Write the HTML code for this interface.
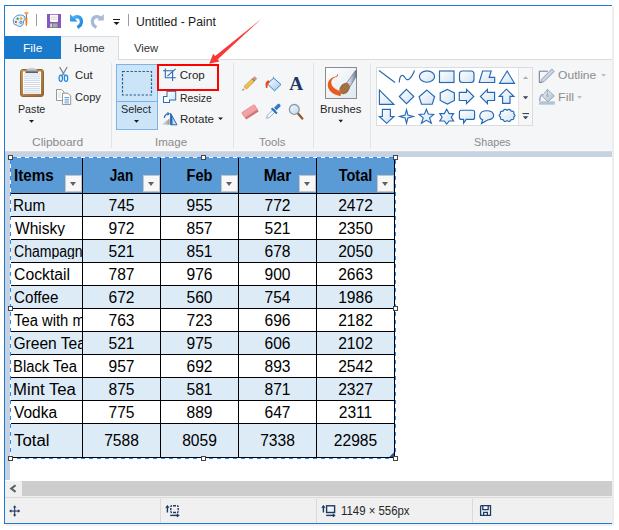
<!DOCTYPE html>
<html><head><meta charset="utf-8"><style>
*{margin:0;padding:0;box-sizing:border-box}
html,body{width:619px;height:530px;overflow:hidden;background:#fff}
body{position:relative;font-family:"Liberation Sans",sans-serif}
.a{position:absolute}
.t{position:absolute;white-space:nowrap;font-size:12px;line-height:12px;color:#262626;transform-origin:0 0}
svg{position:absolute;overflow:visible}
.tb{position:absolute;white-space:nowrap;font-size:15.6px;line-height:15.6px;font-weight:bold;color:#000}
.td{position:absolute;white-space:nowrap;font-size:15.6px;line-height:15.6px;color:#000}
.fb{position:absolute;width:17px;height:17px;background:#f7f7f7;border:1px solid #c6c6c6}
.fb:after{content:"";position:absolute;left:4px;top:6px;border-left:3.5px solid transparent;border-right:3.5px solid transparent;border-top:4px solid #606060}
.hd{position:absolute;width:5px;height:5px;background:#fff;border:1px solid #444}
</style></head><body>

<!-- window frame -->
<div class="a" style="left:4px;top:5px;width:608px;height:1px;background:#1a7ad4"></div>
<div class="a" style="left:4px;top:5px;width:1px;height:519px;background:#1a7ad4"></div>
<div class="a" style="left:4px;top:523px;width:608px;height:1px;background:#1a7ad4"></div>
<div class="a" style="left:612px;top:7px;width:2px;height:518px;background:#ededed"></div>
<div class="a" style="left:6px;top:524px;width:607px;height:2px;background:#f0f0f0"></div>

<!-- title bar -->
<div id="titlebar">
<svg style="left:0;top:0" width="619" height="36">
  <defs>
    <linearGradient id="gpal" x1="0" y1="0" x2="1" y2="1"><stop offset="0" stop-color="#f4f9fe"/><stop offset="1" stop-color="#cfe3f6"/></linearGradient>
    <linearGradient id="gund" x1="0" y1="0" x2="1" y2="1"><stop offset="0" stop-color="#4fb0f0"/><stop offset="1" stop-color="#1a86e0"/></linearGradient>
  </defs>
  <!-- palette -->
  <path d="M13.3 21 C13.3 17 17 15 20.5 15 C23.8 15 25.3 16.5 25 18.5 C24.7 20 23.5 20.5 23.5 22 C23.5 24.5 22 26.5 19.5 26.5 C17.8 26.5 17.5 25 16 25 C14.3 25 13.3 23.3 13.3 21 Z" fill="url(#gpal)" stroke="#4a93d6" stroke-width="1"/>
  <circle cx="17.6" cy="18.8" r="1.2" fill="#3aa83f"/>
  <circle cx="21" cy="18.5" r="1.2" fill="#f2a01a"/>
  <circle cx="15.9" cy="21.9" r="1.1" fill="#e8402f"/>
  <circle cx="20.8" cy="22.3" r="1.1" fill="none" stroke="#3a7fc4" stroke-width="0.9"/>
  <path d="M25.3 18 L27.4 18 L27.1 24.5 L26.4 26.8 L25.6 24.5 Z" fill="#f47c14"/>
  <rect x="25.9" y="14" width="1" height="4" fill="#6d6d6d"/>
  <ellipse cx="26.4" cy="13" rx="2.2" ry="1.2" fill="#f0a868"/>
  <rect x="36" y="14" width="1" height="12" fill="#9a9a9a"/>
  <!-- save -->
  <rect x="47" y="14" width="14" height="14" fill="#8758bf"/>
  <path d="M50 14.8 L58 14.8 L58 21 Q58 22 57 22 L51 22 Q50 22 50 21 Z" fill="#fbfbfd"/>
  <rect x="50.8" y="16.8" width="6.4" height="0.7" fill="#c4c4cc"/>
  <rect x="50.8" y="18.8" width="6.4" height="0.7" fill="#c4c4cc"/>
  <rect x="50" y="23" width="8" height="5" fill="#7d7d85"/>
  <rect x="50.4" y="23.6" width="1.4" height="3.6" fill="#f2f2f2"/>
  <rect x="53" y="23.6" width="4.4" height="3.6" fill="#a9a9b0"/>
  <!-- undo -->
  <path d="M70 14 L70 21.6 L77.6 21.6 Z" fill="url(#gund)"/>
  <path d="M73.2 18.3 C76.2 15.8 81.2 16.2 81.4 21.2 C81.6 24.3 79.6 26.3 77.4 27.4" stroke="url(#gund)" stroke-width="3.3" fill="none"/>
  <!-- redo -->
  <path d="M103.8 14 L103.8 20.6 L97.2 20.6 Z" fill="#a8bbd4"/>
  <path d="M100.6 17.8 C97.6 15.6 92.6 16.2 92.4 21.2 C92.2 24.3 94.2 26.3 96.4 27.4" stroke="#a8bbd4" stroke-width="3.3" fill="none"/>
  <!-- qat dropdown -->
  <rect x="113" y="19" width="7" height="1" fill="#1a1a1a"/>
  <path d="M113.5 22 L119.5 22 L116.5 25 Z" fill="#1a1a1a"/>
  <rect x="128" y="14" width="1" height="12" fill="#9a9a9a"/>
</svg>
</div>

<!-- tabs -->
<div class="a" style="left:5px;top:36px;width:56px;height:23px;background:#1979ca"></div>
<div class="a" style="left:61px;top:36px;width:58px;height:24px;background:#f5f6f7;border:1px solid #dadbdc;border-left:none;border-bottom:none"></div>
<div class="a" style="left:119px;top:59px;width:493px;height:1px;background:#dadbdc"></div>

<!-- ribbon -->
<div class="a" style="left:5px;top:60px;width:607px;height:91px;background:#f5f6f7"></div>
<div class="a" style="left:111px;top:63px;width:1px;height:85px;background:#e2e3e4"></div>
<div class="a" style="left:233px;top:63px;width:1px;height:85px;background:#e2e3e4"></div>
<div class="a" style="left:313px;top:63px;width:1px;height:85px;background:#e2e3e4"></div>
<div class="a" style="left:370px;top:63px;width:1px;height:85px;background:#e2e3e4"></div>

<!-- group labels -->

<!-- clipboard group -->
<svg style="left:0;top:0" width="619" height="150">
  <defs>
    <linearGradient id="gbrd" x1="0" y1="0" x2="1" y2="1"><stop offset="0" stop-color="#c99557"/><stop offset="1" stop-color="#9c6a34"/></linearGradient>
    <linearGradient id="gclip" x1="0" y1="0" x2="0" y2="1"><stop offset="0" stop-color="#e8e8e8"/><stop offset="1" stop-color="#8a8a8a"/></linearGradient>
  </defs>
  <rect x="20.5" y="69.5" width="23" height="27" rx="2.5" fill="url(#gbrd)" stroke="#94652f" stroke-width="1"/>
  <rect x="23" y="71.5" width="18" height="22.5" fill="#fdfdfd"/>
  <g stroke="#b4c6d8" stroke-width="0.7"><line x1="24" y1="74.0" x2="40" y2="74.0"/><line x1="24" y1="76.1" x2="40" y2="76.1"/><line x1="24" y1="78.2" x2="40" y2="78.2"/><line x1="24" y1="80.3" x2="40" y2="80.3"/><line x1="24" y1="82.4" x2="40" y2="82.4"/><line x1="24" y1="84.5" x2="40" y2="84.5"/><line x1="24" y1="86.6" x2="40" y2="86.6"/><line x1="24" y1="88.7" x2="40" y2="88.7"/><line x1="24" y1="90.8" x2="40" y2="90.8"/><line x1="24" y1="92.9" x2="40" y2="92.9"/></g>
  <path d="M25.5 72.5 C26 69.5 28.5 67.5 31.7 67.5 C35 67.5 37.5 69.5 38 72.5 Z" fill="url(#gclip)"/>
  <rect x="25.5" y="71.6" width="12.5" height="1.2" fill="#4a4a4a"/>
  <path d="M29 120 L34 120 L31.5 122.8 Z" fill="#1a1a1a"/>
  <!-- scissors -->
  <path d="M59.6 67 L64.6 75.5 M67.2 67 L62.2 75.5" stroke="#7b8794" stroke-width="1.3" fill="none"/>
  <ellipse cx="60.8" cy="78.3" rx="1.7" ry="3.1" fill="#e3f1fc" stroke="#1f87e0" stroke-width="1.2"/>
  <ellipse cx="66" cy="78.3" rx="1.7" ry="3.1" fill="#e3f1fc" stroke="#1f87e0" stroke-width="1.2"/>
  <!-- copy -->
  <path d="M56.5 89.5 L61.5 89.5 L64 92 L64 100.5 L56.5 100.5 Z" fill="#fff" stroke="#8c8c8c" stroke-width="0.9"/>
  <g stroke="#b8cde0" stroke-width="0.7"><line x1="58" y1="93" x2="61" y2="93"/><line x1="58" y1="95" x2="61" y2="95"/><line x1="58" y1="97" x2="61" y2="97"/></g>
  <path d="M62.5 93.2 L68 93.2 L70.7 96 L70.7 104.5 L62.5 104.5 Z" fill="#fff" stroke="#8c8c8c" stroke-width="0.9"/>
  <g stroke="#3d8ad6" stroke-width="0.8"><line x1="64.5" y1="97.5" x2="69" y2="97.5"/><line x1="64.5" y1="99.3" x2="69" y2="99.3"/><line x1="64.5" y1="101.1" x2="69" y2="101.1"/><line x1="64.5" y1="102.9" x2="69" y2="102.9"/></g>
</svg>

<!-- image group -->
<div class="a" style="left:116px;top:64px;width:42px;height:66px;background:#cce4f7;border:1px solid #7eb3e8"></div>
<div class="a" style="left:116px;top:101px;width:42px;height:1px;background:#7eb3e8"></div>
<svg style="left:0;top:0" width="619" height="150">
  <defs>
    <linearGradient id="glb" x1="0" y1="0" x2="1" y2="1"><stop offset="0" stop-color="#ffffff"/><stop offset="1" stop-color="#d4e6f6"/></linearGradient>
    <linearGradient id="ggr" x1="0" y1="0" x2="1" y2="0"><stop offset="0" stop-color="#f0f0f0"/><stop offset="1" stop-color="#9a9a9a"/></linearGradient>
  </defs>
  <rect x="122.5" y="71.5" width="29" height="23.5" fill="none" stroke="#2d5c8e" stroke-width="1.2" stroke-dasharray="2.4 1.6"/>
  <path d="M134 120 L139 120 L136.5 122.8 Z" fill="#1a1a1a"/>
  <!-- crop -->
  <g stroke="#2a6cb5" stroke-width="1.1" fill="none">
    <path d="M165.3 68.5 L165.3 77.7 L175.8 77.7"/>
    <path d="M163 70.7 L172.6 70.7 L172.6 81"/>
    <path d="M167.4 76.2 L175.6 68.8"/>
  </g>
  <!-- resize -->
  <rect x="163.5" y="96.5" width="6" height="6" fill="#fff" stroke="#2a6cb5" stroke-width="1"/>
  <rect x="167" y="91.3" width="8.7" height="8.7" fill="url(#glb)" stroke="#2a6cb5" stroke-width="1"/>
  <rect x="164.1" y="97.1" width="4.8" height="4.8" fill="#fff"/>
  <rect x="167.6" y="97.1" width="1.3" height="2.4" fill="#fff"/>
  <!-- rotate -->
  <path d="M161 124.8 L169.7 118.6 L169.7 124.8 Z" fill="url(#ggr)"/>
  <path d="M170.6 113.3 L177 124.8 L170.6 124.8 Z" fill="#c5dcf2" stroke="#2a6cb5" stroke-width="1" stroke-linejoin="round"/>
  <path d="M170.6 113.3 L170.6 124.8 L172.5 124.8 L172.5 116.5 Z" fill="#2a6cb5"/>
  <path d="M164.3 117.8 C164.8 115.2 166.5 113.8 168.3 113.8" fill="none" stroke="#2a6cb5" stroke-width="1.3"/>
  <path d="M167.5 111.8 L170 113.8 L167.5 115.8 Z" fill="#2a6cb5"/>
  <path d="M218 117.5 L223 117.5 L220.5 120 Z" fill="#1a1a1a"/>
</svg>
<div class="a" style="left:157px;top:64px;width:62px;height:27px;border:2px solid #fe0000"></div>

<!-- tools group -->
<svg style="left:0;top:0" width="619" height="150">
  <defs>
    <linearGradient id="gbk" x1="0" y1="0" x2="1" y2="1"><stop offset="0" stop-color="#ffffff"/><stop offset="1" stop-color="#9cc8ee"/></linearGradient>
    <linearGradient id="gmag" x1="0" y1="0" x2="1" y2="1"><stop offset="0" stop-color="#f4f9fe"/><stop offset="1" stop-color="#bcd9f2"/></linearGradient>
  </defs>
  <!-- pencil -->
  <g transform="translate(242.3 90.6) rotate(-44)">
    <path d="M0 0 L4.2 -1.8 L4.2 1.8 Z" fill="#f3dcb0"/>
    <path d="M0 0 L1.6 -0.7 L1.6 0.7 Z" fill="#2a2a2a"/>
    <rect x="4.2" y="-1.8" width="10.8" height="3.6" fill="#f2c249" stroke="#a07424" stroke-width="0.5"/>
    <rect x="15" y="-1.8" width="1.3" height="3.6" fill="#5a8f5a"/>
    <rect x="16.3" y="-1.8" width="2.6" height="3.6" rx="0.6" fill="#e48b80"/>
  </g>
  <!-- fill bucket -->
  <path d="M273.5 76.5 L273.2 82" stroke="#8a8a8a" stroke-width="0.8" fill="none"/>
  <circle cx="273.2" cy="82.2" r="0.9" fill="none" stroke="#8a8a8a" stroke-width="0.6"/>
  <path d="M267 83.5 L273.8 78.2 L281 84.5 L274.5 90.8 Z" fill="url(#gbk)" stroke="#3b7fc6" stroke-width="1" stroke-linejoin="round"/>
  <path d="M268.6 80.2 C266.6 80.6 265.3 82.6 265.5 85 L265.9 88 L267.3 88 L267.8 84.5 L270 82 Z" fill="#e84a1a"/>
  <!-- A -->
  <text x="289.2" y="89.8" font-family="Liberation Serif" font-weight="bold" font-size="19.2" fill="#1f3864">A</text>
  <!-- eraser -->
  <g transform="translate(250 111.8) rotate(-33)">
    <rect x="-7.5" y="-3.8" width="15" height="6" rx="0.8" fill="#f4a3a3" stroke="#d77b7b" stroke-width="0.6"/>
    <rect x="-7.5" y="2.2" width="15" height="2.2" fill="#d27474"/>
  </g>
  <!-- color picker -->
  <path d="M266.5 118.3 L267.3 115.3 L273.8 108.8 L276 111 L269.5 117.5 Z" fill="#eef5fb" stroke="#7f96ad" stroke-width="0.7"/>
  <path d="M272.3 107.5 L277.6 112.8 L276.2 114.2 L270.9 108.9 Z" fill="#2c6fb8"/>
  <path d="M274 107.8 L277.8 104 C279 102.8 281.5 105.3 280.3 106.5 L276.5 110.3 Z" fill="#2f7bcf"/>
  <!-- magnifier -->
  <path d="M298 113.5 L302.3 118.6" stroke="#8f5a2a" stroke-width="2.3" stroke-linecap="round"/>
  <circle cx="294.3" cy="109.4" r="4.9" fill="url(#gmag)" stroke="#8c98a4" stroke-width="1.3"/>
</svg>

<!-- brushes -->
<svg style="left:0;top:0" width="619" height="150">
  <defs>
    <linearGradient id="gbrbg" x1="0" y1="0" x2="1" y2="1"><stop offset="0" stop-color="#ffffff"/><stop offset="1" stop-color="#dde8f1"/></linearGradient>
    <linearGradient id="ghdl" x1="0" y1="0" x2="1" y2="0"><stop offset="0" stop-color="#f2f4f7"/><stop offset="0.5" stop-color="#c0c8d4"/><stop offset="1" stop-color="#6f7f96"/></linearGradient>
  </defs>
  <rect x="325.5" y="67.5" width="31" height="31" fill="url(#gbrbg)" stroke="#8c8c8c" stroke-width="1"/>
  <path d="M336.8 73.8 C337.8 75 337 76.2 335.5 76.5 C331 77.5 327.8 80.5 327.8 85 C327.8 89.5 331.5 93 335 94.5 L340.5 96.3 C341.5 93.5 340.5 91.5 338.5 90.5 C334 88.5 331.5 86 331.3 83 C331.2 79.5 333.5 77.8 336.3 77 C338.5 76.3 338.8 74.5 336.8 73.8 Z" fill="#ea5a1c"/>
  <path d="M345.5 84.5 L355.5 70.5 L356.2 70.8 L356.2 76.5 L349.2 88 Z" fill="url(#ghdl)" stroke="#3f4f66" stroke-width="0.5"/>
  <ellipse cx="344.6" cy="88.6" rx="6.3" ry="4.6" transform="rotate(-52 344.6 88.6)" fill="#9d6d3d"/>
  <path d="M340 92 L347.5 84 M342 93 L349 86" stroke="#b88a58" stroke-width="0.6"/>
  <path d="M338.5 119.8 L343 119.8 L340.75 122.6 Z" fill="#1a1a1a"/>
</svg>

<!-- shapes gallery -->
<div class="a" style="left:376px;top:67px;width:157px;height:59px;border:1px solid #dcdcdc;background:#fff"></div>
<div class="a" style="left:518px;top:68px;width:14px;height:57px;background:#f7f7f7;border-left:1px solid #e3e3e3"></div>
<svg style="left:0;top:0" width="619" height="150" id="shapes">
 <defs>
  <linearGradient id="gsh" x1="0" y1="0" x2="1" y2="1"><stop offset="0" stop-color="#ffffff"/><stop offset="1" stop-color="#d2e4f4"/></linearGradient>
  <linearGradient id="gfl" x1="0" y1="0" x2="1" y2="1"><stop offset="0" stop-color="#f4f6f8"/><stop offset="1" stop-color="#a9b9cb"/></linearGradient>
 </defs>
 <g fill="url(#gsh)" stroke="#2568b3" stroke-width="1.15" stroke-linejoin="miter">
  <!-- row1 -->
  <path d="M379 70.5 L395 82.5" fill="none"/>
  <path d="M399.3 82.5 C399.5 75 402.5 73.5 404.8 77.5 C407 81.3 410.5 80.5 414.5 70.5" fill="none"/>
  <ellipse cx="427" cy="76.5" rx="7.6" ry="5.7"/>
  <rect x="439.5" y="71" width="14.5" height="11.5"/>
  <rect x="459.5" y="71" width="14.5" height="11.5" rx="3"/>
  <path d="M482.6 71 L491.2 71 L489.2 77.3 L494.7 77.3 L494.7 82.5 L479.2 82.5 Z"/>
  <path d="M507.1 71 L514.5 83.3 L499.6 83.3 Z"/>
  <!-- row2 -->
  <path d="M379.4 90 L379.4 104.3 L393.9 104.3 Z"/>
  <path d="M406.5 89.4 L413.8 96.5 L406.5 103.6 L399.3 96.5 Z"/>
  <path d="M426.9 90.1 L434.6 96.8 L432.2 104.2 L421.5 104.2 L419.1 96.8 Z"/>
  <path d="M447.4 89.4 L454.4 92.9 L454.4 100.5 L447.4 104.1 L440.2 100.5 L440.2 92.9 Z"/>
  <path d="M459.3 92.4 L466.5 92.4 L466.5 89.4 L473.8 96.5 L466.5 103.6 L466.5 100.5 L459.3 100.5 Z"/>
  <path d="M494.6 92.4 L487.4 92.4 L487.4 89.4 L480.4 96.5 L487.4 103.6 L487.4 100.5 L494.6 100.5 Z"/>
  <path d="M506.3 89.2 L513.9 96.3 L510 96.3 L510 103.3 L502.6 103.3 L502.6 96.3 L499.2 96.3 Z"/>
  <!-- row3 -->
  <path d="M382.4 109.4 L390.4 109.4 L390.4 116.5 L393.9 116.5 L386.7 123.3 L379.4 116.5 L382.4 116.5 Z"/>
  <path d="M406.5 109.7 L407.9 115.1 L413.3 116.5 L407.9 117.9 L406.5 123.3 L405.1 117.9 L399.7 116.5 L405.1 115.1 Z"/>
  <path d="M426.4 109.3 L428.3 114 L433.7 114.5 L429.6 117.9 L431.4 123.2 L426.4 120.3 L421.4 123.2 L423.2 117.9 L419.1 114.5 L424.5 114 Z"/>
  <path d="M446.7 109.3 L449.1 113.6 L453.6 113.6 L451.3 117.3 L453.6 121 L449.1 121 L446.7 124 L444.3 121 L439.8 121 L442.1 117.3 L439.8 113.6 L444.3 113.6 Z"/>
  <path d="M461.4 110.2 L472.6 110.2 Q474.6 110.2 474.6 112.2 L474.6 117.4 Q474.6 119.4 472.6 119.4 L466.3 119.4 L463.6 123.2 L463.6 119.4 L461.4 119.4 Q459.4 119.4 459.4 117.4 L459.4 112.2 Q459.4 110.2 461.4 110.2 Z"/>
  <path d="M482.6 119.8 C478.3 118 478.5 110.7 486.9 110.7 C495 110.7 496.5 119.4 487.6 120 L481.5 123.5 Z"/>
  <path d="M507.10 110.20 Q509.97 108.17 511.16 111.19 Q514.62 110.93 513.66 113.79 Q516.40 115.40 513.66 117.01 Q514.62 119.87 511.16 119.61 Q509.97 122.63 507.10 120.60 Q504.23 122.63 503.04 119.61 Q499.58 119.87 500.54 117.01 Q497.80 115.40 500.54 113.79 Q499.58 110.93 503.04 111.19 Q504.23 108.17 507.10 110.20 Z"/>
 </g>
  <!-- scroll arrows -->
  <path d="M522.8 79 L528.3 79 L525.55 76.3 Z" fill="#a9b1ba"/>
  <path d="M522.8 96.2 L528.3 96.2 L525.55 99.2 Z" fill="#34445c"/>
  <rect x="522.5" y="113" width="6.5" height="1.1" fill="#34445c"/>
  <path d="M522.8 116.2 L528.3 116.2 L525.55 119.2 Z" fill="#34445c"/>
  <!-- outline icon -->
  <defs><linearGradient id="gpen" x1="0" y1="0" x2="1" y2="1"><stop offset="0" stop-color="#e6edf5"/><stop offset="1" stop-color="#aebdd0"/></linearGradient></defs>
  <path d="M547.8 71.2 L539.3 71.2 L539.3 82.5 L542 82.5" fill="none" stroke="#6d7a92" stroke-width="1"/>
  <path d="M540.8 82.6 L541.6 79.2 L551.8 69 L554.2 71.4 L544 81.6 Z" fill="url(#gpen)" stroke="#7f8da6" stroke-width="0.8" stroke-linejoin="round"/>
  <path d="M601.2 74.2 L606 74.2 L603.6 76.6 Z" fill="#b0b0b0"/>
  <!-- fill icon -->
  <rect x="539.1" y="101.3" width="15.7" height="3.4" fill="#b4c3d4"/>
  <path d="M542.3 96 L547.5 89.4 L554.4 96 L547.7 101.8 Z" fill="url(#gfl)" stroke="#93a3b8" stroke-width="0.9" stroke-linejoin="round"/>
  <circle cx="547.4" cy="95.6" r="0.9" fill="none" stroke="#7f8da6" stroke-width="0.6"/>
  <path d="M547.4 89.6 L547.4 94.7" stroke="#7f8da6" stroke-width="0.6"/>
  <path d="M542.5 94.2 C540.6 95.5 539.6 98 539.8 101" stroke="#a0b0c4" stroke-width="1.6" fill="none"/>
  <path d="M577.2 96.2 L582 96.2 L579.6 98.6 Z" fill="#b0b0b0"/>
</svg>

<!-- workspace -->
<div class="a" style="left:5px;top:150px;width:607px;height:1px;background:#f9fafa"></div>
<div class="a" style="left:5px;top:151px;width:607px;height:1px;background:#d5d8dc"></div>
<div class="a" style="left:5px;top:152px;width:607px;height:5px;background:#c6d1e1"></div>
<div class="a" style="left:5px;top:152px;width:5px;height:328px;background:#c6d1e1"></div>

<!-- table image -->
<div class="a" style="left:10px;top:157px;width:385px;height:37px;background:#5b9bd5"></div>
<div class="a" style="left:10px;top:194px;width:385px;height:22px;background:#ddebf7"></div>
<div class="a" style="left:10px;top:217px;width:385px;height:22px;background:#ffffff"></div>
<div class="a" style="left:10px;top:240px;width:385px;height:22px;background:#ddebf7"></div>
<div class="a" style="left:10px;top:263px;width:385px;height:22px;background:#ffffff"></div>
<div class="a" style="left:10px;top:286px;width:385px;height:22px;background:#ddebf7"></div>
<div class="a" style="left:10px;top:309px;width:385px;height:22px;background:#ffffff"></div>
<div class="a" style="left:10px;top:332px;width:385px;height:22px;background:#ddebf7"></div>
<div class="a" style="left:10px;top:355px;width:385px;height:22px;background:#ffffff"></div>
<div class="a" style="left:10px;top:378px;width:385px;height:22px;background:#ddebf7"></div>
<div class="a" style="left:10px;top:401px;width:385px;height:22px;background:#ffffff"></div>
<div class="a" style="left:10px;top:424px;width:385px;height:33px;background:#ddebf7"></div>
<div class="a" style="left:10px;top:193px;width:385px;height:1px;background:#000"></div>
<div class="a" style="left:10px;top:216px;width:385px;height:1px;background:#000"></div>
<div class="a" style="left:10px;top:239px;width:385px;height:1px;background:#000"></div>
<div class="a" style="left:10px;top:262px;width:385px;height:1px;background:#000"></div>
<div class="a" style="left:10px;top:285px;width:385px;height:1px;background:#000"></div>
<div class="a" style="left:10px;top:308px;width:385px;height:1px;background:#000"></div>
<div class="a" style="left:10px;top:331px;width:385px;height:1px;background:#000"></div>
<div class="a" style="left:10px;top:354px;width:385px;height:1px;background:#000"></div>
<div class="a" style="left:10px;top:377px;width:385px;height:1px;background:#000"></div>
<div class="a" style="left:10px;top:400px;width:385px;height:1px;background:#000"></div>
<div class="a" style="left:10px;top:423px;width:385px;height:1px;background:#000"></div>
<div class="a" style="left:10px;top:457px;width:385px;height:1px;background:#000"></div>
<div class="a" style="left:82px;top:157px;width:1px;height:301px;background:#000"></div>
<div class="a" style="left:160px;top:157px;width:1px;height:301px;background:#000"></div>
<div class="a" style="left:238px;top:157px;width:1px;height:301px;background:#000"></div>
<div class="a" style="left:316px;top:157px;width:1px;height:301px;background:#000"></div>
<div class="a" style="left:394px;top:157px;width:1px;height:301px;background:#000"></div>
<div class="tb" style="left:14.2px;top:167.79px;transform:scaleX(0.975);transform-origin:0 0">Items</div>
<div class="fb" style="left:65px;top:175px"></div>
<div class="tb" style="left:83px;width:77px;text-align:center;top:167.79px;transform:scaleX(0.87)">Jan</div>
<div class="fb" style="left:143px;top:175px"></div>
<div class="tb" style="left:161px;width:77px;text-align:center;top:167.79px;transform:scaleX(0.93)">Feb</div>
<div class="fb" style="left:221px;top:175px"></div>
<div class="tb" style="left:239px;width:77px;text-align:center;top:167.79px;transform:scaleX(1.0)">Mar</div>
<div class="fb" style="left:299px;top:175px"></div>
<div class="tb" style="left:317px;width:77px;text-align:center;top:167.79px;transform:scaleX(0.93)">Total</div>
<div class="fb" style="left:377px;top:175px"></div>
<div class="td" style="left:13.28px;width:70.12px;overflow:hidden;top:197.79px;transform:scaleX(0.98);transform-origin:0 0">Rum</div>
<div class="td" style="left:83px;width:77px;text-align:center;top:197.79px">745</div>
<div class="td" style="left:161px;width:77px;text-align:center;top:197.79px">955</div>
<div class="td" style="left:239px;width:77px;text-align:center;top:197.79px">772</div>
<div class="td" style="left:317px;width:77px;text-align:center;top:197.79px">2472</div>
<div class="td" style="left:14.63px;width:67.57px;overflow:hidden;top:220.79px;transform:scaleX(0.997);transform-origin:0 0">Whisky</div>
<div class="td" style="left:83px;width:77px;text-align:center;top:220.79px">972</div>
<div class="td" style="left:161px;width:77px;text-align:center;top:220.79px">857</div>
<div class="td" style="left:239px;width:77px;text-align:center;top:220.79px">521</div>
<div class="td" style="left:317px;width:77px;text-align:center;top:220.79px">2350</div>
<div class="td" style="left:13.6px;width:76.00px;overflow:hidden;top:243.79px;transform:scaleX(0.9);transform-origin:0 0">Champagne</div>
<div class="td" style="left:83px;width:77px;text-align:center;top:243.79px">521</div>
<div class="td" style="left:161px;width:77px;text-align:center;top:243.79px">851</div>
<div class="td" style="left:239px;width:77px;text-align:center;top:243.79px">678</div>
<div class="td" style="left:317px;width:77px;text-align:center;top:243.79px">2050</div>
<div class="td" style="left:13.54px;width:67.72px;overflow:hidden;top:266.79px;transform:scaleX(1.011);transform-origin:0 0">Cocktail</div>
<div class="td" style="left:83px;width:77px;text-align:center;top:266.79px">787</div>
<div class="td" style="left:161px;width:77px;text-align:center;top:266.79px">976</div>
<div class="td" style="left:239px;width:77px;text-align:center;top:266.79px">900</div>
<div class="td" style="left:317px;width:77px;text-align:center;top:266.79px">2663</div>
<div class="td" style="left:13.57px;width:70.40px;overflow:hidden;top:289.79px;transform:scaleX(0.972);transform-origin:0 0">Coffee</div>
<div class="td" style="left:83px;width:77px;text-align:center;top:289.79px">672</div>
<div class="td" style="left:161px;width:77px;text-align:center;top:289.79px">560</div>
<div class="td" style="left:239px;width:77px;text-align:center;top:289.79px">754</div>
<div class="td" style="left:317px;width:77px;text-align:center;top:289.79px">1986</div>
<div class="td" style="left:13.5px;width:72.11px;overflow:hidden;top:312.79px;transform:scaleX(0.95);transform-origin:0 0">Tea with milk</div>
<div class="td" style="left:83px;width:77px;text-align:center;top:312.79px">763</div>
<div class="td" style="left:161px;width:77px;text-align:center;top:312.79px">723</div>
<div class="td" style="left:239px;width:77px;text-align:center;top:312.79px">696</div>
<div class="td" style="left:317px;width:77px;text-align:center;top:312.79px">2182</div>
<div class="td" style="left:13.4px;width:68.60px;overflow:hidden;top:335.79px;transform:scaleX(1.0);transform-origin:0 0">Green Tea</div>
<div class="td" style="left:83px;width:77px;text-align:center;top:335.79px">521</div>
<div class="td" style="left:161px;width:77px;text-align:center;top:335.79px">975</div>
<div class="td" style="left:239px;width:77px;text-align:center;top:335.79px">606</div>
<div class="td" style="left:317px;width:77px;text-align:center;top:335.79px">2102</div>
<div class="td" style="left:12.91px;width:72.73px;overflow:hidden;top:358.79px;transform:scaleX(0.95);transform-origin:0 0">Black Tea</div>
<div class="td" style="left:83px;width:77px;text-align:center;top:358.79px">957</div>
<div class="td" style="left:161px;width:77px;text-align:center;top:358.79px">692</div>
<div class="td" style="left:239px;width:77px;text-align:center;top:358.79px">893</div>
<div class="td" style="left:317px;width:77px;text-align:center;top:358.79px">2542</div>
<div class="td" style="left:12.76px;width:64.59px;overflow:hidden;top:381.79px;transform:scaleX(1.072);transform-origin:0 0">Mint Tea</div>
<div class="td" style="left:83px;width:77px;text-align:center;top:381.79px">875</div>
<div class="td" style="left:161px;width:77px;text-align:center;top:381.79px">581</div>
<div class="td" style="left:239px;width:77px;text-align:center;top:381.79px">871</div>
<div class="td" style="left:317px;width:77px;text-align:center;top:381.79px">2327</div>
<div class="td" style="left:13.98px;width:68.43px;overflow:hidden;top:404.79px;transform:scaleX(0.994);transform-origin:0 0">Vodka</div>
<div class="td" style="left:83px;width:77px;text-align:center;top:404.79px">775</div>
<div class="td" style="left:161px;width:77px;text-align:center;top:404.79px">889</div>
<div class="td" style="left:239px;width:77px;text-align:center;top:404.79px">647</div>
<div class="td" style="left:317px;width:77px;text-align:center;top:404.79px">2311</div>
<div class="td" style="left:14.3px;width:62.92px;overflow:hidden;top:432.79px;transform:scaleX(1.076);transform-origin:0 0">Total</div>
<div class="td" style="left:83px;width:77px;text-align:center;top:432.79px">7588</div>
<div class="td" style="left:161px;width:77px;text-align:center;top:432.79px">8059</div>
<div class="td" style="left:239px;width:77px;text-align:center;top:432.79px">7338</div>
<div class="td" style="left:317px;width:77px;text-align:center;top:432.79px">22985</div>
<svg style="left:0;top:0" width="619" height="530"><path d="M394 452.2 L394 457 L389.2 457 Z" fill="#2f5597"/></svg>
<div class="a" style="left:10px;top:157px;width:386px;height:1px;background:repeating-linear-gradient(90deg,#fff 0 3px,#1e90ff 3px 7px,#fff 7px 8px)"></div>
<div class="a" style="left:10px;top:458px;width:386px;height:1px;background:repeating-linear-gradient(90deg,#1e90ff 0 3px,#fff 3px 7px,#1e90ff 7px 8px)"></div>
<div class="a" style="left:10px;top:157px;width:1px;height:302px;background:repeating-linear-gradient(180deg,#fff 0 3px,#1e90ff 3px 7px,#fff 7px 8px)"></div>
<div class="a" style="left:395px;top:157px;width:1px;height:302px;background:repeating-linear-gradient(180deg,#fff 0 3px,#1e90ff 3px 7px,#fff 7px 8px)"></div>
<div class="hd" style="left:8px;top:155px"></div>
<div class="hd" style="left:201px;top:155px"></div>
<div class="hd" style="left:393px;top:155px"></div>
<div class="hd" style="left:8px;top:306px"></div>
<div class="hd" style="left:393px;top:306px"></div>
<div class="hd" style="left:8px;top:456px"></div>
<div class="hd" style="left:201px;top:456px"></div>
<div class="hd" style="left:393px;top:456px"></div>

<!-- scrollbar -->
<div class="a" style="left:5px;top:481px;width:607px;height:16px;background:#f0f0f0"></div>
<div class="a" style="left:22px;top:481px;width:590px;height:15px;background:#cdcdcd"></div>
<svg style="left:0;top:0" width="619" height="530">
  <path d="M15.6 485.3 L11.2 488.6 L15.6 491.9" fill="none" stroke="#5f5f5f" stroke-width="2"/>
</svg>
<div class="a" style="left:5px;top:497px;width:607px;height:1px;background:#dadada"></div>

<!-- status bar -->
<div class="a" style="left:5px;top:498px;width:607px;height:25px;background:#f0f0f0"></div>
<div class="a" style="left:160px;top:499px;width:1px;height:24px;background:#d9d9d9"></div>
<div class="a" style="left:316px;top:499px;width:1px;height:24px;background:#d9d9d9"></div>
<div class="a" style="left:472px;top:499px;width:1px;height:24px;background:#d9d9d9"></div>
<svg style="left:0;top:0" width="619" height="530">
  <defs><linearGradient id="gst" x1="0" y1="0" x2="1" y2="1"><stop offset="0" stop-color="#ffffff"/><stop offset="1" stop-color="#dbe8f3"/></linearGradient></defs>
  <g fill="#1f3a5f" stroke="none">
   <rect x="14.1" y="506.5" width="1.1" height="9"/>
   <rect x="10" y="510.5" width="9.3" height="1.1"/>
   <path d="M14.65 505.2 L12.9 507.5 L16.4 507.5 Z"/>
   <path d="M14.65 516.8 L12.9 514.5 L16.4 514.5 Z"/>
   <path d="M9.1 511.05 L11.4 509.3 L11.4 512.8 Z"/>
   <path d="M20.2 511.05 L17.9 509.3 L17.9 512.8 Z"/>
  </g>
  <g stroke="#1f3a5f" fill="none">
   <path d="M167.4 512.5 L167.4 506.5" stroke-width="1.4"/>
   <path d="M165.8 507.6 L167.4 505.3 L169 507.6 Z" fill="#1f3a5f" stroke-width="0.6"/>
   <path d="M170.8 507 Q170.8 505.8 172 505.8 M173 505.8 L176 505.8 M177 505.8 Q178.2 505.8 178.2 507 M178.2 508 L178.2 510.3 M178.2 511.3 Q178.2 512.5 177 512.5 M176 512.5 L173 512.5 M172 512.5 Q170.8 512.5 170.8 511.3 M170.8 510.3 L170.8 508" stroke-width="1.4"/>
   <path d="M170.2 515.4 L178 515.4" stroke-width="1.4"/>
   <path d="M177 513.8 L179.3 515.4 L177 517 Z" fill="#1f3a5f" stroke-width="0.6"/>
  </g>
  <g stroke="#1f3a5f" fill="none">
   <path d="M323.4 512.5 L323.4 506.5" stroke-width="1.4"/>
   <path d="M321.8 507.6 L323.4 505.3 L325 507.6 Z" fill="#1f3a5f" stroke-width="0.6"/>
   <rect x="326.6" y="505.8" width="8" height="6.7" fill="url(#gst)" stroke-width="1.4"/>
   <path d="M326.2 515.4 L334 515.4" stroke-width="1.4"/>
   <path d="M333 513.8 L335.3 515.4 L333 517 Z" fill="#1f3a5f" stroke-width="0.6"/>
  </g>
  <g stroke="#1f3a5f" stroke-width="1.3" fill="none">
   <path d="M481.2 505.6 L490.5 505.6 L490.5 515.4 L480.6 515.4 L480.6 506.2 Z" fill="#f4f9fd"/>
   <path d="M482.8 505.6 L482.8 509.6 L488.2 509.6 L488.2 505.6"/>
   <path d="M483.6 515.4 L483.6 512.3 L487.4 512.3 L487.4 515.4"/>
  </g>
</svg>

<div class="t" style="left:135.71px;top:15.90px;font-size:12px;line-height:12px;font-weight:400;color:#1a1a1a;transform:scaleX(1.015)">Untitled - Paint</div>
<div class="t" style="left:23.17px;top:42.20px;font-size:11.6px;line-height:11.6px;font-weight:400;color:#ffffff;transform:scaleX(1.034)">File</div>
<div class="t" style="left:74.31px;top:42.20px;font-size:11.6px;line-height:11.6px;font-weight:400;color:#333333;transform:scaleX(0.991)">Home</div>
<div class="t" style="left:134.38px;top:42.20px;font-size:11.6px;line-height:11.6px;font-weight:400;color:#333333;transform:scaleX(0.973)">View</div>
<div class="t" style="left:17.58px;top:102.80px;font-size:11.6px;line-height:11.6px;font-weight:400;color:#262626;transform:scaleX(0.921)">Paste</div>
<div class="t" style="left:74.99px;top:69.00px;font-size:11.6px;line-height:11.6px;font-weight:400;color:#262626;transform:scaleX(0.978)">Cut</div>
<div class="t" style="left:75.00px;top:90.80px;font-size:11.6px;line-height:11.6px;font-weight:400;color:#262626;transform:scaleX(0.955)">Copy</div>
<div class="t" style="left:120.94px;top:103.40px;font-size:11.6px;line-height:11.6px;font-weight:400;color:#262626;transform:scaleX(0.930)">Select</div>
<div class="t" style="left:179.68px;top:68.90px;font-size:11.6px;line-height:11.6px;font-weight:400;color:#262626;transform:scaleX(1.000)">Crop</div>
<div class="t" style="left:179.90px;top:92.00px;font-size:11.6px;line-height:11.6px;font-weight:400;color:#262626;transform:scaleX(0.900)">Resize</div>
<div class="t" style="left:179.80px;top:113.00px;font-size:11.6px;line-height:11.6px;font-weight:400;color:#262626;transform:scaleX(0.996)">Rotate</div>
<div class="t" style="left:319.62px;top:103.00px;font-size:11.6px;line-height:11.6px;font-weight:400;color:#262626;transform:scaleX(0.975)">Brushes</div>
<div class="t" style="left:558.18px;top:69.00px;font-size:11.6px;line-height:11.6px;font-weight:400;color:#8d8d8d;transform:scaleX(1.043)">Outline</div>
<div class="t" style="left:557.62px;top:90.80px;font-size:11.6px;line-height:11.6px;font-weight:400;color:#8d8d8d;transform:scaleX(1.085)">Fill</div>
<div class="t" style="left:31.95px;top:136.00px;font-size:11.6px;line-height:11.6px;font-weight:400;color:#8a8a8a;transform:scaleX(1.032)">Clipboard</div>
<div class="t" style="left:155.18px;top:135.50px;font-size:11.6px;line-height:11.6px;font-weight:400;color:#8a8a8a;transform:scaleX(0.996)">Image</div>
<div class="t" style="left:258.56px;top:135.80px;font-size:11.6px;line-height:11.6px;font-weight:400;color:#8a8a8a;transform:scaleX(0.974)">Tools</div>
<div class="t" style="left:474.24px;top:135.50px;font-size:11.6px;line-height:11.6px;font-weight:400;color:#8a8a8a;transform:scaleX(0.928)">Shapes</div>
<div class="t" style="left:340.77px;top:505.00px;font-size:12px;line-height:12px;font-weight:400;color:#262626;transform:scaleX(0.950)">1149 × 556px</div>

<!-- red arrow -->
<svg style="left:0;top:0" width="619" height="530">
  <path d="M260.8 19.3 L214.6 56.6 L217.6 59.6 Z" fill="#fb3737"/>
  <path d="M209.2 63.8 L213.2 53.8 L219.4 61.6 Z" fill="#fb3737"/>
</svg>

</body></html>
